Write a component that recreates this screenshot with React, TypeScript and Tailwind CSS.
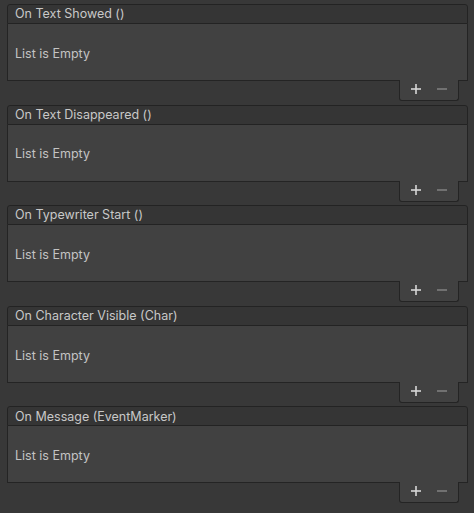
import React from "react";

const events = [
  "On Text Showed ()",
  "On Text Disappeared ()",
  "On Typewriter Start ()",
  "On Character Visible (Char)",
  "On Message (EventMarker)",
];

function EventList({ title }: { title: string }) {
  return (
    <div className="flex flex-col mb-[3.6px]">
      <div className="h-[20px] flex items-center pl-[7px] pt-[1px] bg-[#353535] border border-[#232323] rounded-t-[3px] text-[12.5px] text-[#c8c8c8] leading-none">
        {title}
      </div>
      <div className="h-[57px] flex items-center pl-[7px] pt-[4px] bg-[#414141] border-x border-b border-[#242424] text-[12.5px] text-[#c4c4c4] leading-none">
        List is Empty
      </div>
      <div className="flex justify-end pr-[9px]">
        <div className="relative -mt-px w-[60px] h-[21px] bg-[#414141] border-x border-b border-[#242424] rounded-b-[3px] flex items-center">
          <svg width="10" height="10" viewBox="0 0 10 10" className="absolute left-[11px] top-[4px]">
            <rect x="4.2" y="0" width="1.6" height="10" fill="#d6d6d6" />
            <rect x="0" y="4.2" width="10" height="1.6" fill="#d6d6d6" />
          </svg>
          <svg width="10" height="10" viewBox="0 0 10 10" className="absolute left-[37px] top-[4px]">
            <rect x="0" y="4.2" width="10" height="1.6" fill="#7e7e7e" />
          </svg>
        </div>
      </div>
    </div>
  );
}

export default function App() {
  return (
    <div
      className="w-[474px] h-[513px] bg-[#383838] pt-[4px] pl-[7px] pr-[6px] overflow-hidden"
      style={{ fontFamily: "Inter, 'Noto Sans', sans-serif" }}
    >
      {events.map((e) => (
        <EventList key={e} title={e} />
      ))}
    </div>
  );
}
